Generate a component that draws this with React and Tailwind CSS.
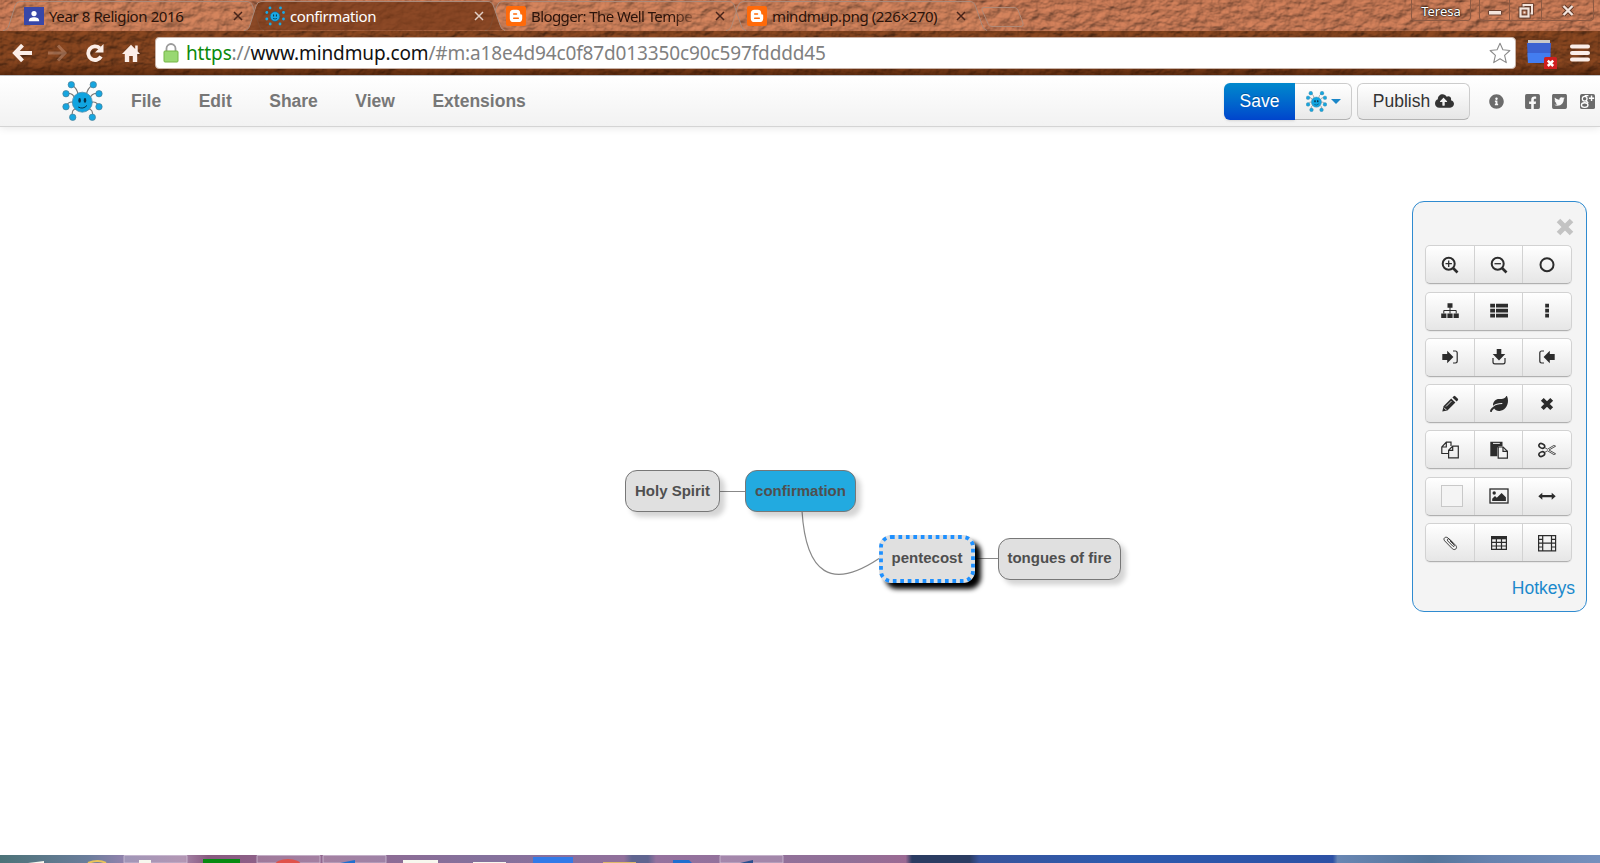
import { FaLeaf, FaInfoCircle, FaFacebookSquare, FaTwitterSquare, FaCloudUploadAlt } from 'react-icons/fa';

const TABS = [
  { title: 'Year 8 Religion 2016', icon: 'classroom', layer: 'z-0' },
  { title: 'confirmation', icon: 'mindmup', layer: 'z-30', active: true },
  { title: 'Blogger: The Well Tempe', icon: 'blogger', layer: 'z-20', fade: true },
  { title: 'mindmup.png (226×270)', icon: 'blogger', layer: 'z-10' },
];

const MENU = ['File', 'Edit', 'Share', 'View', 'Extensions'];

function Texture({ id, base, seed }) {
  return (
    <svg className="absolute inset-0 h-full w-full" aria-hidden="true">
      <filter id={id} x="0" y="0" width="100%" height="100%" colorInterpolationFilters="sRGB">
        <feTurbulence type="fractalNoise" baseFrequency="0.08 0.12" numOctaves="4" seed={seed} result="n" />
        <feDiffuseLighting in="n" surfaceScale="2.1" diffuseConstant="1.15" lightingColor={base}>
          <feDistantLight azimuth="235" elevation="60" />
        </feDiffuseLighting>
      </filter>
      <rect width="100%" height="100%" filter={`url(#${id})`} />
    </svg>
  );
}

function MindmupLogo({ className, bold }) {
  const arms = [
    [9.3, 3.7, 15.5, 7, 16, 14],
    [31.3, 3.7, 25, 7, 24.5, 14],
    [4, 12.7, 11, 11, 13, 18],
    [37, 12.7, 30, 11, 27.5, 18],
    [4, 25.7, 6, 19, 13, 22],
    [37, 25.7, 35, 19, 27.5, 22],
    [10.7, 36.3, 8.5, 28, 15, 27.5],
    [30.3, 36.3, 32, 28, 25.5, 27.5],
  ];
  return (
    <svg viewBox="0 0 41 40" className={className}>
      {arms.map(([x, y, cx, cy, ex, ey]) => (
        <g key={`${x}-${y}`}>
          <path d={`M${x} ${y}Q${cx} ${cy} ${ex} ${ey}`} fill="none" stroke="#777" strokeWidth="1.1" />
          <circle cx={x} cy={y} r={bold ? 3.6 : 3.2} fill="#16a6e0" stroke="#4b7f97" strokeWidth="0.7" />
        </g>
      ))}
      <circle cx="20.3" cy="21.2" r="10" fill="#10a4e0" stroke="#4b8cab" strokeWidth="0.8" />
      <ellipse cx="17.6" cy="19.4" rx="1.3" ry="2.3" fill="#06324a" />
      <ellipse cx="23" cy="19.4" rx="1.3" ry="2.3" fill="#06324a" />
      <path d="M16.2 26q5 2.800 8.800-1.600" fill="none" stroke="#06324a" strokeWidth="1" />
    </svg>
  );
}

function Favicon({ kind }) {
  if (kind === 'mindmup') {
    return (
      <svg viewBox="0 0 20 20" className="h-5 w-5 shrink-0" fill="#19aae6">
        <circle cx="10" cy="10.500" r="4.800" stroke="#1b5d80" strokeWidth="0.600" />
        <path d="M8.600 8.500v2M11.400 8.500v2" stroke="#06324a" strokeWidth="1" />
        <path d="M8 12.300q2.200 1.400 4 0" fill="none" stroke="#06324a" strokeWidth="0.700" />
        <circle cx="5" cy="2" r="1.400" />
        <circle cx="15.500" cy="2" r="1.400" />
        <circle cx="1.800" cy="6.500" r="1.400" />
        <circle cx="18.500" cy="6.500" r="1.400" />
        <circle cx="1.800" cy="13" r="1.400" />
        <circle cx="18.500" cy="13" r="1.400" />
        <circle cx="5.200" cy="18" r="1.400" />
        <circle cx="15" cy="18" r="1.400" />
      </svg>
    );
  }
  if (kind === 'blogger') {
    return (
      <svg viewBox="0 0 20 20" className="h-5 w-5 shrink-0">
        <rect width="20" height="20" rx="2" fill="#ff6a0a" />
        <path d="M7.500 3.800h3.300a3.400 3.400 0 0 1 3.400 3.200c.1 1.300.3 1.500 1.100 1.600.7.100.9.400.9 1.100v2.700a3.700 3.700 0 0 1-3.700 3.700H7.500a3.700 3.700 0 0 1-3.700-3.700V7.500a3.700 3.700 0 0 1 3.700-3.700z" fill="#fff" />
        <path d="M7.700 8h2.800M7.700 12.200h4.600" stroke="#ff6a0a" strokeWidth="1.500" strokeLinecap="round" />
      </svg>
    );
  }
  return (
    <svg viewBox="0 0 20 18" className="h-[18px] w-5 shrink-0">
      <rect width="20" height="18" fill="#3847a8" />
      <circle cx="10" cy="6.600" r="2.600" fill="#fff" />
      <path d="M4.800 14.300c0-3.100 2.400-4 5.200-4s5.200.9 5.200 4z" fill="#fff" />
    </svg>
  );
}

function TabShape({ active }) {
  return (
    <svg viewBox="0 0 261 30" className="absolute inset-0 h-full w-full">
      <path
        d="M0 29.500C4 29 5 27 6 24L12 5Q13.500 .5 17 .5H244Q248 .5 249.500 5L256 24Q257 28.500 261 29.500"
        fill={active ? '#733514' : '#e0946a'}
        fillOpacity={active ? 0.75 : 0.18}
        stroke="#a98a7b"
      />
    </svg>
  );
}

function Tab({ tab }) {
  return (
    <div className={`relative -mr-5 flex h-[30px] w-[261px] shrink-0 items-center px-[21px] ${tab.layer}`}>
      <TabShape active={tab.active} />
      <div className="relative flex w-full min-w-0 items-center">
        <Favicon kind={tab.icon} />
        <span
          className={`ml-[5px] whitespace-nowrap text-[15px] leading-5 ${tab.active ? 'text-white' : 'text-[#2b130a]'} ${tab.fade ? 'tracking-[-0.6px] [mask-image:linear-gradient(to_right,#000_88%,rgba(0,0,0,0.3))]' : 'tracking-[-0.4px]'}`}
        >
          {tab.title}
        </span>
        <svg viewBox="0 0 10 10" className="ml-auto h-[10px] w-[10px] shrink-0">
          <path d="M1 1l8 8M9 1L1 9" stroke={tab.active ? '#e3cfc5' : '#47241a'} strokeWidth="1.500" />
        </svg>
      </div>
    </div>
  );
}

function WindowControls() {
  return (
    <div className="ml-auto flex h-[21px] items-stretch">
      <div className="mr-2 flex w-[60px] items-end justify-center rounded-b border border-t-0 border-[#8d5a43] text-[13px] leading-[18px] text-white [text-shadow:0_0_2px_#000,0_0_2px_#000]">
        Teresa
      </div>
      <div className="mr-[6px] flex w-[115px] rounded-b border border-t-0 border-[#8d5a43]">
        <div className="flex w-[30px] items-center justify-center border-r border-[#8d5a43]">
          <svg viewBox="0 0 14 6" className="mt-[5px] h-[6px] w-[14px]">
            <rect x="0.500" y="0.500" width="13" height="4.500" rx="0.500" fill="#f3e4dc" stroke="#6d4332" />
          </svg>
        </div>
        <div className="flex w-[32px] items-center justify-center border-r border-[#8d5a43]">
          <svg viewBox="0 0 16 16" className="mt-px h-4 w-4">
            <path d="M5.500 4V2h8.500v8.500h-2" fill="none" stroke="#5e3828" strokeWidth="3.600" />
            <path d="M5.500 4V2h8.500v8.500h-2" fill="none" stroke="#f3e4dc" strokeWidth="2" />
            <rect x="2.500" y="5.500" width="8" height="8" fill="none" stroke="#5e3828" strokeWidth="4" />
            <rect x="2.500" y="5.500" width="8" height="8" fill="none" stroke="#f3e4dc" strokeWidth="2.200" />
            <rect x="5.500" y="8.500" width="2" height="2" fill="#f3e4dc" />
          </svg>
        </div>
        <div className="flex flex-1 items-center justify-center">
          <svg viewBox="0 0 14 13" className="h-[13px] w-[14px]">
            <path d="M2.500 2l9 9M11.500 2l-9 9" stroke="#5e3828" strokeWidth="4.200" />
            <path d="M2.500 2l9 9M11.500 2l-9 9" stroke="#f3e4dc" strokeWidth="2.400" />
          </svg>
        </div>
      </div>
    </div>
  );
}

function TabStrip() {
  return (
    <div className="relative h-[31px] overflow-hidden">
      <Texture id="wood-light" base="#bc7351" seed="4" />
      <div className="relative flex h-full">
        <div className="flex pt-[1px] pl-[3px]">
          {TABS.map((tab) => (
            <Tab key={tab.title} tab={tab} />
          ))}
          <svg viewBox="0 0 44 20" className="mt-[6px] ml-[14px] h-5 w-11">
            <path d="M1 3Q0 .5 3 .5H33Q36 .5 37 3l5 13q1 3.500-2 3.500H11q-3 0-4-3z" fill="#e0946a" fillOpacity="0.15" stroke="#b08a78" />
          </svg>
        </div>
        <WindowControls />
      </div>
    </div>
  );
}

function AddressBar() {
  return (
    <div className="relative h-[45px] overflow-hidden border-b border-[#c4c4c8]">
      <Texture id="wood-dark" base="#7c401d" seed="9" />
      <div className="absolute inset-0 bg-linear-to-b from-transparent from-70% to-[#3c1500]/50" />
      <div className="relative flex h-full items-center">
        <svg viewBox="0 0 20 18" className="ml-3 h-[18px] w-5">
          <path d="M10.500 1.200L3 9l7.500 7.800M3.500 9H20" fill="none" stroke="#fbeee8" strokeWidth="4" />
        </svg>
        <svg viewBox="0 0 20 18" className="ml-4 h-[18px] w-5 opacity-35">
          <path d="M10 1.500L17 9l-7 7.500M16.500 9H0" fill="none" stroke="#e0b8a4" strokeWidth="3" />
        </svg>
        <svg viewBox="0 0 18 18" className="ml-[18px] h-[18px] w-[18px]">
          <path d="M15 12.500A6.800 6.800 0 1 1 13.700 4.200" fill="none" stroke="#fbeee8" strokeWidth="3.800" />
          <path d="M17.500 0v8.500H9z" fill="#fbeee8" />
        </svg>
        <svg viewBox="0 0 18 18" className="ml-[18px] h-[18px] w-[18px]">
          <path d="M9 .8L0 10h2.800v8h4.400v-6h3.600v6h4.400v-8H18l-2.300-2.400V1.500h-2.500v3.600z" fill="#fbeee8" />
        </svg>
        <div className="ml-[15px] flex h-8 w-[1361px] items-center rounded-sm border border-[#c9b3a8] bg-white">
          <svg viewBox="0 0 16 20" className="ml-[7px] h-5 w-4">
            <path d="M3.500 9V5.500a4.500 4.500 0 0 1 9 0V9" fill="none" stroke="#9b9b9b" strokeWidth="1.800" />
            <rect x="1" y="8" width="14" height="11" rx="1" fill="#99d872" stroke="#74b545" />
          </svg>
          <span className="ml-[7px] whitespace-nowrap text-[19px] leading-7 tracking-[-0.130px] text-[#808080]">
            <span className="text-[#0b8a0b]">https</span>://<span className="text-[#111]">www.mindmup.com</span>/#m:a18e4d94c0f87d013350c90c597fdddd45
          </span>
          <svg viewBox="0 0 22 22" className="mr-[4px] ml-auto h-[22px] w-[22px]">
            <path d="M11 1.200l2.900 6.600 7 .7-5.300 4.800 1.700 7.300L11 16.800l-6.300 3.800 1.700-7.300L1.100 8.500l7-.7z" fill="#fff" stroke="#8a8a8a" strokeWidth="1.100" strokeLinejoin="round" />
          </svg>
        </div>
        <svg viewBox="0 0 32 32" className="ml-[10px] h-8 w-8">
          <rect x="2" y="3" width="22" height="5" fill="#c9c9c9" />
          <path d="M1 6h24l-1 20H2z" fill="#3b62d1" />
          <path d="M1.500 16h23l-.5 10H2z" fill="#437df0" />
          <rect x="18" y="20" width="13" height="13" rx="1.500" fill="#d01f1f" />
          <path d="M21.800 23.600l5.400 5.400M27.200 23.600l-5.400 5.400" stroke="#fff" strokeWidth="2.500" />
        </svg>
        <svg viewBox="0 0 20 18" className="ml-[12px] h-[18px] w-5">
          <path d="M2 2.500h16M2 9h16M2 15.500h16" stroke="#fbeee8" strokeWidth="4" strokeLinecap="round" />
        </svg>
      </div>
    </div>
  );
}

function GooglePlus() {
  return (
    <svg viewBox="0 0 16 16" className="h-[15px] w-[15px] shrink-0">
      <path d="M2 0h12a2 2 0 0 1 2 2v12a2 2 0 0 1-2 2H2a2 2 0 0 1-2-2V2a2 2 0 0 1 2-2z" fill="#6b6b6b" />
      <circle cx="5" cy="5" r="2.500" fill="none" stroke="#fff" strokeWidth="1.400" />
      <path d="M5 1.800h4M6.500 7.200l2.300 2.300" stroke="#fff" strokeWidth="1.400" />
      <ellipse cx="5" cy="11.800" rx="3.500" ry="2.500" fill="none" stroke="#fff" strokeWidth="1.400" />
      <path d="M12.300 1.500v6M9.500 4.500h5.600" stroke="#fff" strokeWidth="1.500" />
    </svg>
  );
}

function Navbar() {
  return (
    <header className="relative z-10 flex h-[51px] items-center border-b border-[#d4d4d4] bg-linear-to-b from-white to-[#f2f2f2] shadow-[0_1px_8px_rgba(0,0,0,0.1)]">
      <MindmupLogo className="ml-[62px] h-[40px] w-[41px]" />
      <nav className="ml-[28px] flex gap-[37.500px] text-[17.5px] leading-6 font-bold text-[#777]">
        {MENU.map((item) => (
          <span key={item}>{item}</span>
        ))}
      </nav>
      <div className="ml-auto flex items-center text-[17.5px]">
        <button className="h-[37px] w-[71px] rounded-l-md bg-linear-to-b from-[#0088cc] to-[#0044cc] text-white shadow-sm [text-shadow:0_-1px_0_rgba(0,0,0,0.25)]">Save</button>
        <button className="flex h-[37px] w-[57px] items-center justify-center gap-1 rounded-r-md border border-l-0 border-[#ccc] border-b-[#b3b3b3] bg-linear-to-b from-white to-[#e9e9e9]">
          <MindmupLogo bold className="h-[21px] w-[21px]" />
          <svg viewBox="0 0 10 5" className="h-[5px] w-[10px]">
            <path d="M0 0h10L5 5z" fill="#1a86c8" />
          </svg>
        </button>
        <button className="ml-[5px] flex h-[37px] w-[113px] items-center justify-center gap-[5px] rounded-md border border-[#ccc] border-b-[#b3b3b3] bg-linear-to-b from-white to-[#e6e6e6] text-[#333]">
          Publish <FaCloudUploadAlt className="h-[18px] w-[19px]" />
        </button>
      </div>
      <div className="ml-[19px] flex items-center text-[#6b6b6b]">
        <FaInfoCircle className="h-[15px] w-[15px]" />
        <FaFacebookSquare className="ml-[20px] h-[17px] w-[17px]" />
        <FaTwitterSquare className="ml-[10px] h-[17px] w-[17px]" />
        <div className="mr-[5px] ml-[12px]">
          <GooglePlus />
        </div>
      </div>
    </header>
  );
}

const strokeProps = { fill: 'none', stroke: 'currentColor' };

function Glyph({ children }) {
  return (
    <svg viewBox="0 0 18 18" className="h-[18px] w-[18px]" fill="currentColor">
      {children}
    </svg>
  );
}

const ICONS = {
  zoomIn: (
    <Glyph>
      <circle cx="7.700" cy="7.700" r="6" {...strokeProps} strokeWidth="2" />
      <path d="M12 12l4.500 4.500" {...strokeProps} strokeWidth="2.700" />
      <path d="M4.500 7.700h6.400M7.700 4.500v6.400" {...strokeProps} strokeWidth="1.300" />
    </Glyph>
  ),
  zoomOut: (
    <Glyph>
      <circle cx="7.700" cy="7.700" r="6" {...strokeProps} strokeWidth="2" />
      <path d="M12 12l4.500 4.500" {...strokeProps} strokeWidth="2.700" />
      <path d="M4.500 7.700h6.400" {...strokeProps} strokeWidth="1.300" />
    </Glyph>
  ),
  circle: (
    <Glyph>
      <circle cx="9" cy="8.700" r="6.500" {...strokeProps} strokeWidth="2" />
    </Glyph>
  ),
  sitemap: (
    <Glyph>
      <path d="M6.500 1.200h5v4.600h-5zM.2 11.400h5.200v4.600H.2zM6.400 11.400h5.200v4.600H6.400zM12.600 11.400h5.200v4.600h-5.200z" />
      <path d="M9 5v6.500M2.800 11.500V8.500h12.400v3" {...strokeProps} strokeWidth="1" />
    </Glyph>
  ),
  list: (
    <Glyph>
      <path d="M.2 1.800h4.800v3.800H.2zM6 1.800h12v3.800H6zM.2 6.800h4.800v3.800H.2zM6 6.800h12v3.800H6zM.2 11.800h4.800v3.800H.2zM6 11.800h12v3.800H6z" />
    </Glyph>
  ),
  dots: (
    <Glyph>
      <path d="M7.200 1.800h3.800v3.800H7.200zM7.200 6.800h3.800v3.800H7.200zM7.200 11.800h3.800v3.800H7.200z" />
    </Glyph>
  ),
  signIn: (
    <Glyph>
      <path d="M1.300 6h4.900V2.700L12.400 9l-6.200 6.300V12H1.300z" />
      <path d="M12 3h2.300q1.900 0 1.900 1.900v8.200q0 1.900-1.900 1.900H12" {...strokeProps} strokeWidth="1.200" />
    </Glyph>
  ),
  download: (
    <Glyph>
      <path d="M6.700 1h4.600v5h4L9 12.600 2.700 6h4z" />
      <path d="M3 10v3.900q0 1.900 1.900 1.900h8.200q1.900 0 1.900-1.900V10" {...strokeProps} strokeWidth="1.200" />
    </Glyph>
  ),
  signOut: (
    <Glyph>
      <path d="M16.700 6h-4.900V2.700L5.600 9l6.200 6.300V12h4.900z" />
      <path d="M6 3H3.700Q1.800 3 1.800 4.900v8.200q0 1.900 1.900 1.900H6" {...strokeProps} strokeWidth="1.200" />
    </Glyph>
  ),
  pencil: (
    <Glyph>
      <path d="M1.300 16.500l1.200-5.200 7.700-7.700 4.200 4-8 8zM11.400 2.500l1.300-1.300q.8-.7 1.600 0l2.600 2.500q.6.800 0 1.600l-1.300 1.300z" />
      <path d="M5 11.500L10.500 6M3 12.700l2.500 2.500" {...strokeProps} stroke="#eee" strokeWidth="0.900" />
    </Glyph>
  ),
  leaf: <FaLeaf className="h-[16px] w-[18px]" />,
  remove: (
    <Glyph>
      <path d="M4.300 4.300l9.400 9.400M13.700 4.300l-9.400 9.400" {...strokeProps} strokeWidth="4" />
    </Glyph>
  ),
  copy: (
    <Glyph>
      <path d="M7 12.500H.8V6l4.500-4.800H10V5M5.300 1.500V6H1" {...strokeProps} strokeWidth="1.200" />
      <path d="M11.700 5.200h5.600v11.600H7.600V9.300zM11.700 5.200v4.200H7.600" {...strokeProps} strokeWidth="1.200" />
    </Glyph>
  ),
  paste: (
    <Glyph>
      <path d="M.3 .8h12.200v4.400H8.800L7.300 6.700v8.600h-7z" />
      <path d="M3 2.400h6.800" stroke="#eee" strokeWidth="1" />
      <path d="M8.200 6h4.900l4.300 4.300v6.900H8.200z" fill="#f4f4f4" stroke="currentColor" strokeWidth="1.200" />
      <path d="M13 6v4.400h4.400" {...strokeProps} strokeWidth="1.200" />
    </Glyph>
  ),
  cut: (
    <Glyph>
      <ellipse cx="3.800" cy="4.900" rx="3" ry="2.200" transform="rotate(25 3.800 4.900)" {...strokeProps} strokeWidth="1.600" />
      <ellipse cx="3.800" cy="13.100" rx="3" ry="2.200" transform="rotate(-25 3.800 13.100)" {...strokeProps} strokeWidth="1.600" />
      <path d="M6.500 6.500l3 1.700 6.400-3.800 1.700.8L11 9l6.600 3.800-1.700.8-6.400-3.800-3 1.700" {...strokeProps} strokeWidth="0.800" />
    </Glyph>
  ),
  color: <span className="ml-1 h-[22px] w-[22px] border border-[#c8c8c8] bg-[#f4f4f4]" />,
  image: (
    <svg viewBox="0 0 20 18" className="h-[18px] w-5" fill="currentColor">
      <rect x="1" y="2" width="18" height="14" {...strokeProps} strokeWidth="1.300" />
      <circle cx="5.200" cy="6" r="1.700" />
      <path d="M3.200 14v-2.300L6 9l1.800 1.700 4.800-4.600 4.300 4.200V14z" />
    </svg>
  ),
  resize: (
    <Glyph>
      <path d="M.3 9.200l4-3.500v2.400h9.400V5.700l4 3.500-4 3.500v-2.400H4.300v2.400z" />
    </Glyph>
  ),
  clip: (
    <Glyph>
      <path d="M12.500 9.500L7 4C4.800 2 1.600 4.200 3.600 6.800l7.800 8C13.900 17 17 14 14.800 11.500L8.600 5.200C7.300 4 5.600 5.500 6.700 6.900l5.200 5.300c.9.800 2-.2 1.200-1.200L9 6.900" {...strokeProps} strokeWidth="0.900" />
    </Glyph>
  ),
  table: (
    <Glyph>
      <path d="M1 2h16v3.300H1z" />
      <path d="M1.600 4v11.400h14.800V4M1.600 8.300h14.800M1.600 12h14.800M6.400 5v10.400M11.500 5v10.400" {...strokeProps} strokeWidth="1.200" />
    </Glyph>
  ),
  film: (
    <svg viewBox="0 0 20 18" className="h-[18px] w-5" fill="none" stroke="currentColor" strokeWidth="1.200">
      <path d="M1.600 1.600h17v15.200h-17zM5.700 1.600v15.200M14.500 1.600v15.200M5.700 9.200h8.800" />
      <path d="M1.600 5.400h4.100M1.600 9.200h4.100M1.600 13h4.100M14.500 5.400h4.100M14.500 9.200h4.100M14.500 13h4.100" />
    </svg>
  ),
};

const TOOL_ROWS = [
  ['zoomIn', 'zoomOut', 'circle'],
  ['sitemap', 'list', 'dots'],
  ['signIn', 'download', 'signOut'],
  ['pencil', 'leaf', 'remove'],
  ['copy', 'paste', 'cut'],
  ['color', 'image', 'resize'],
  ['clip', 'table', 'film'],
];

function ToolPanel() {
  return (
    <aside className="absolute top-[74px] right-[13px] flex h-[411px] w-[175px] flex-col rounded-xl border border-[#2f8bd0] bg-[#f4f4f4] px-3">
      <svg viewBox="0 0 18 18" className="mt-[16px] h-[18px] w-[18px] self-end">
        <path d="M2.500 2.500l13 13M15.500 2.500l-13 13" stroke="#c3c3c3" strokeWidth="5" />
      </svg>
      <div className="mt-[9.300px] flex flex-col gap-[7.300px]">
        {TOOL_ROWS.map((row) => (
          <div key={row[0]} className="flex h-[39px] w-[147px] divide-x divide-[#d2d2d2] rounded-[5px] border border-[#d2d2d2] border-b-[#b0b0b0] bg-linear-to-b from-white to-[#e6e6e6] shadow-[0_1px_1px_rgba(0,0,0,0.06)]">
            {row.map((name) => (
              <button key={name} className="flex flex-1 items-center justify-center text-[#2c2c2c]">
                {ICONS[name]}
              </button>
            ))}
          </div>
        ))}
      </div>
      <a className="mt-[14px] -mr-px self-end text-[17.5px] leading-6 text-[#1b89cc]">Hotkeys</a>
    </aside>
  );
}

const NODE = 'absolute flex items-center justify-center rounded-xl text-[15px] font-bold whitespace-nowrap text-[#4f4f4f]';

function MindMap() {
  return (
    <main className="relative flex-1 bg-white">
      <svg className="absolute inset-0 h-full w-full" fill="none" stroke="#888" strokeWidth="1.200">
        <path d="M719 364.500h27M975 431.500h24M802 384Q808 479 879 431.500" />
      </svg>
      <div className={`${NODE} top-[343px] left-[625px] h-[42px] w-[95px] border border-[#777] bg-[#e0e0e0] shadow-[5px_5px_5px_rgba(0,0,0,0.17)]`}>Holy Spirit</div>
      <div className={`${NODE} top-[343px] left-[745px] h-[42px] w-[111px] border border-[#777] bg-[#22aae0] shadow-[5px_5px_5px_rgba(0,0,0,0.17)]`}>confirmation</div>
      <div className={`${NODE} top-[408px] left-[879px] h-[48px] w-[96px] bg-[#e0e0e0] pb-px shadow-[6px_6px_5px_#000]`}>
        <svg className="absolute inset-0 h-full w-full">
          <rect x="2" y="2" width="92" height="44" rx="10" fill="none" stroke="#1e90ff" strokeWidth="3.800" strokeDasharray="3.700 3.750" />
        </svg>
        pentecost
      </div>
      <div className={`${NODE} top-[410.500px] left-[998px] h-[42px] w-[123px] border border-[#777] bg-[#e0e0e0] shadow-[5px_5px_5px_rgba(0,0,0,0.17)]`}>tongues of fire</div>
      <ToolPanel />
    </main>
  );
}

// Only the top edge of the taskbar is visible
function Taskbar() {
  return (
    <svg viewBox="0 0 1600 8" className="h-2 w-full">
      <defs>
        <linearGradient id="taskbar">
          <stop offset="0" stopColor="#4c7378" />
          <stop offset="0.055" stopColor="#6a7d9b" />
          <stop offset="0.075" stopColor="#8d82ab" />
          <stop offset="0.115" stopColor="#a583a6" />
          <stop offset="0.130" stopColor="#885a80" />
          <stop offset="0.200" stopColor="#936890" />
          <stop offset="0.300" stopColor="#84719c" />
          <stop offset="0.390" stopColor="#91709b" />
          <stop offset="0.395" stopColor="#606590" />
          <stop offset="0.405" stopColor="#606590" />
          <stop offset="0.410" stopColor="#95729e" />
          <stop offset="0.530" stopColor="#907097" />
          <stop offset="0.566" stopColor="#9b6a93" />
          <stop offset="0.570" stopColor="#2b3c62" />
          <stop offset="0.606" stopColor="#2b3c62" />
          <stop offset="0.612" stopColor="#38549b" />
          <stop offset="0.700" stopColor="#2d5bae" />
          <stop offset="0.833" stopColor="#2d51a5" />
          <stop offset="0.836" stopColor="#6886b3" />
          <stop offset="0.895" stopColor="#55769b" />
          <stop offset="0.930" stopColor="#6682ae" />
          <stop offset="1" stopColor="#7590bd" />
        </linearGradient>
      </defs>
      <rect width="1600" height="8" fill="url(#taskbar)" />
      <path d="M124 .500H187V8H124zM257 .500H320V8H257zM323 .500H386V8H323zM720 .500H783V8H720z" fill="#fff" fillOpacity="0.160" stroke="#d5c7db" strokeOpacity="0.700" />
      <path d="M28 8l16-2v2zM139 5h12v3h-12zM403 5h35v3h-35zM473 7h33v1h-33z" fill="#f7f7ee" />
      <path d="M88 8q10-4 18 0" fill="none" stroke="#eac45a" strokeWidth="2" />
      <path d="M203 4h37v4h-37z" fill="#078a12" />
      <ellipse cx="288" cy="10" rx="13" ry="6" fill="#e0524a" />
      <path d="M340 8l15-3v3zM673 5h16l3 3h-19z" fill="#1f6fd0" />
      <path d="M533 2h40v6h-40z" fill="#327ae8" />
      <path d="M603 7h33v1h-33z" fill="#dfb869" />
      <path d="M740 8l13-3v3z" fill="#29508f" />
    </svg>
  );
}

export default function App() {
  return (
    <div className="flex h-[863px] w-[1600px] flex-col overflow-hidden bg-white font-['Liberation_Sans',Arial,sans-serif]">
      <div className="font-['Noto_Sans','Open_Sans',sans-serif]">
        <TabStrip />
        <AddressBar />
      </div>
      <Navbar />
      <MindMap />
      <Taskbar />
    </div>
  );
}
